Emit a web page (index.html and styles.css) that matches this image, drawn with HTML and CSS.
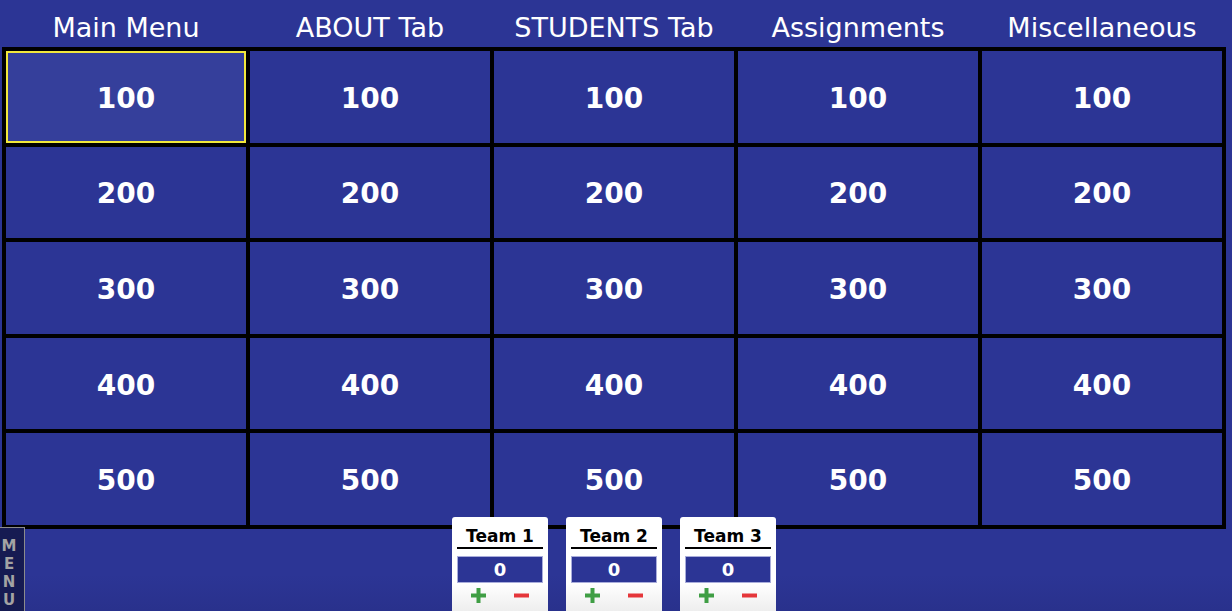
FILE: index.html
```html
<!DOCTYPE html>
<html lang="en">
<head>
<meta charset="utf-8">
<title>Jeopardy Board</title>
<link rel="stylesheet" href="styles.css">
</head>
<body>
<div class="page">
  <div class="game">
    <div class="headers">
      <div class="cat">Main Menu</div>
      <div class="cat">ABOUT Tab</div>
      <div class="cat">STUDENTS Tab</div>
      <div class="cat">Assignments</div>
      <div class="cat">Miscellaneous</div>
    </div>
    <div class="board">
      <div class="cell selected">100</div><div class="cell">100</div><div class="cell">100</div><div class="cell">100</div><div class="cell">100</div>
      <div class="cell">200</div><div class="cell">200</div><div class="cell">200</div><div class="cell">200</div><div class="cell">200</div>
      <div class="cell">300</div><div class="cell">300</div><div class="cell">300</div><div class="cell">300</div><div class="cell">300</div>
      <div class="cell">400</div><div class="cell">400</div><div class="cell">400</div><div class="cell">400</div><div class="cell">400</div>
      <div class="cell">500</div><div class="cell">500</div><div class="cell">500</div><div class="cell">500</div><div class="cell">500</div>
    </div>
    <div class="teams">
      <div class="team">
        <div class="team-name">Team 1</div>
        <div class="score">0</div>
        <div class="controls">
          <span class="ctl"><svg width="15" height="15" viewBox="0 0 15 15"><path d="M7.5 0v15M0 7.5h15" stroke="#3f9e44" stroke-width="4"/></svg></span>
          <span class="ctl"><svg width="15" height="15" viewBox="0 0 15 15"><path d="M0 7.5h15" stroke="#e5363a" stroke-width="4"/></svg></span>
        </div>
      </div>
      <div class="team">
        <div class="team-name">Team 2</div>
        <div class="score">0</div>
        <div class="controls">
          <span class="ctl"><svg width="15" height="15" viewBox="0 0 15 15"><path d="M7.5 0v15M0 7.5h15" stroke="#3f9e44" stroke-width="4"/></svg></span>
          <span class="ctl"><svg width="15" height="15" viewBox="0 0 15 15"><path d="M0 7.5h15" stroke="#e5363a" stroke-width="4"/></svg></span>
        </div>
      </div>
      <div class="team">
        <div class="team-name">Team 3</div>
        <div class="score">0</div>
        <div class="controls">
          <span class="ctl"><svg width="15" height="15" viewBox="0 0 15 15"><path d="M7.5 0v15M0 7.5h15" stroke="#3f9e44" stroke-width="4"/></svg></span>
          <span class="ctl"><svg width="15" height="15" viewBox="0 0 15 15"><path d="M0 7.5h15" stroke="#e5363a" stroke-width="4"/></svg></span>
        </div>
      </div>
    </div>
  </div>
  <div class="menu-tab">
    <span>M</span><span>E</span><span>N</span><span>U</span>
  </div>
</div>
</body>
</html>
```

FILE: styles.css
```css
html, body {
  margin: 0;
  padding: 0;
}
body {
  width: 1232px;
  height: 611px;
  overflow: hidden;
  background: linear-gradient(to bottom, #2c3595 0%, #2c3595 94%, #29318c 100%);
  font-family: "DejaVu Sans", Verdana, sans-serif;
  color: #fff;
}
.page {
  position: relative;
  width: 1232px;
  height: 611px;
}
.game {
  margin-left: 2px;
  width: 1224px;
}
.headers {
  box-sizing: border-box;
  height: 47px;
  padding: 14px 4px 0;
  display: grid;
  grid-template-columns: repeat(5, 240px);
  column-gap: 4px;
}
.cat {
  font-size: 27px;
  line-height: 27px;
  text-align: center;
  white-space: nowrap;
}
.board {
  box-sizing: border-box;
  height: 482px;
  border: 4px solid #000;
  background: #000;
  display: grid;
  grid-template-columns: repeat(5, 240px);
  grid-template-rows: repeat(5, 1fr);
  gap: 4px;
}
.cell {
  box-sizing: border-box;
  padding-top: 3px;
  background: #2c3595;
  display: flex;
  align-items: center;
  justify-content: center;
  font-weight: bold;
  font-size: 28px;
}
.cell.selected {
  background: #353f9b;
  box-shadow: inset 0 0 0 2px #f2e83c;
}
.teams {
  margin-top: -12px;
  display: flex;
  justify-content: center;
  gap: 18px;
}
.team {
  box-sizing: border-box;
  width: 96px;
  height: 110px;
  padding: 9px 5px 0;
  background: linear-gradient(to bottom, #ffffff 0%, #ffffff 60%, #e4e4e4 100%);
  border-radius: 3px 3px 0 0;
  color: #000;
}
.team-name {
  font-size: 17px;
  font-weight: bold;
  line-height: 20px;
  text-align: center;
  padding-bottom: 1px;
  border-bottom: 2px solid #000;
}
.score {
  margin-top: 7px;
  box-sizing: border-box;
  height: 27px;
  background: #2c3595;
  border: 1px solid #a9addb;
  color: #fff;
  font-size: 18px;
  font-weight: bold;
  line-height: 25px;
  text-align: center;
}
.controls {
  display: flex;
  margin-top: 5px;
}
.ctl {
  flex: 1;
  display: flex;
  justify-content: center;
  height: 15px;
}
.menu-tab {
  position: absolute;
  left: 0;
  top: 527px;
  box-sizing: border-box;
  width: 25px;
  height: 90px;
  background: #161b52;
  border-top: 1px solid #8c8c8c;
  border-right: 1px solid #8c8c8c;
  padding: 9px 0 0 1px;
  display: flex;
  flex-direction: column;
  color: #a3a3a3;
  font-size: 15px;
  font-weight: bold;
  line-height: 18px;
}
.menu-tab span {
  width: 16px;
  text-align: center;
}
```
